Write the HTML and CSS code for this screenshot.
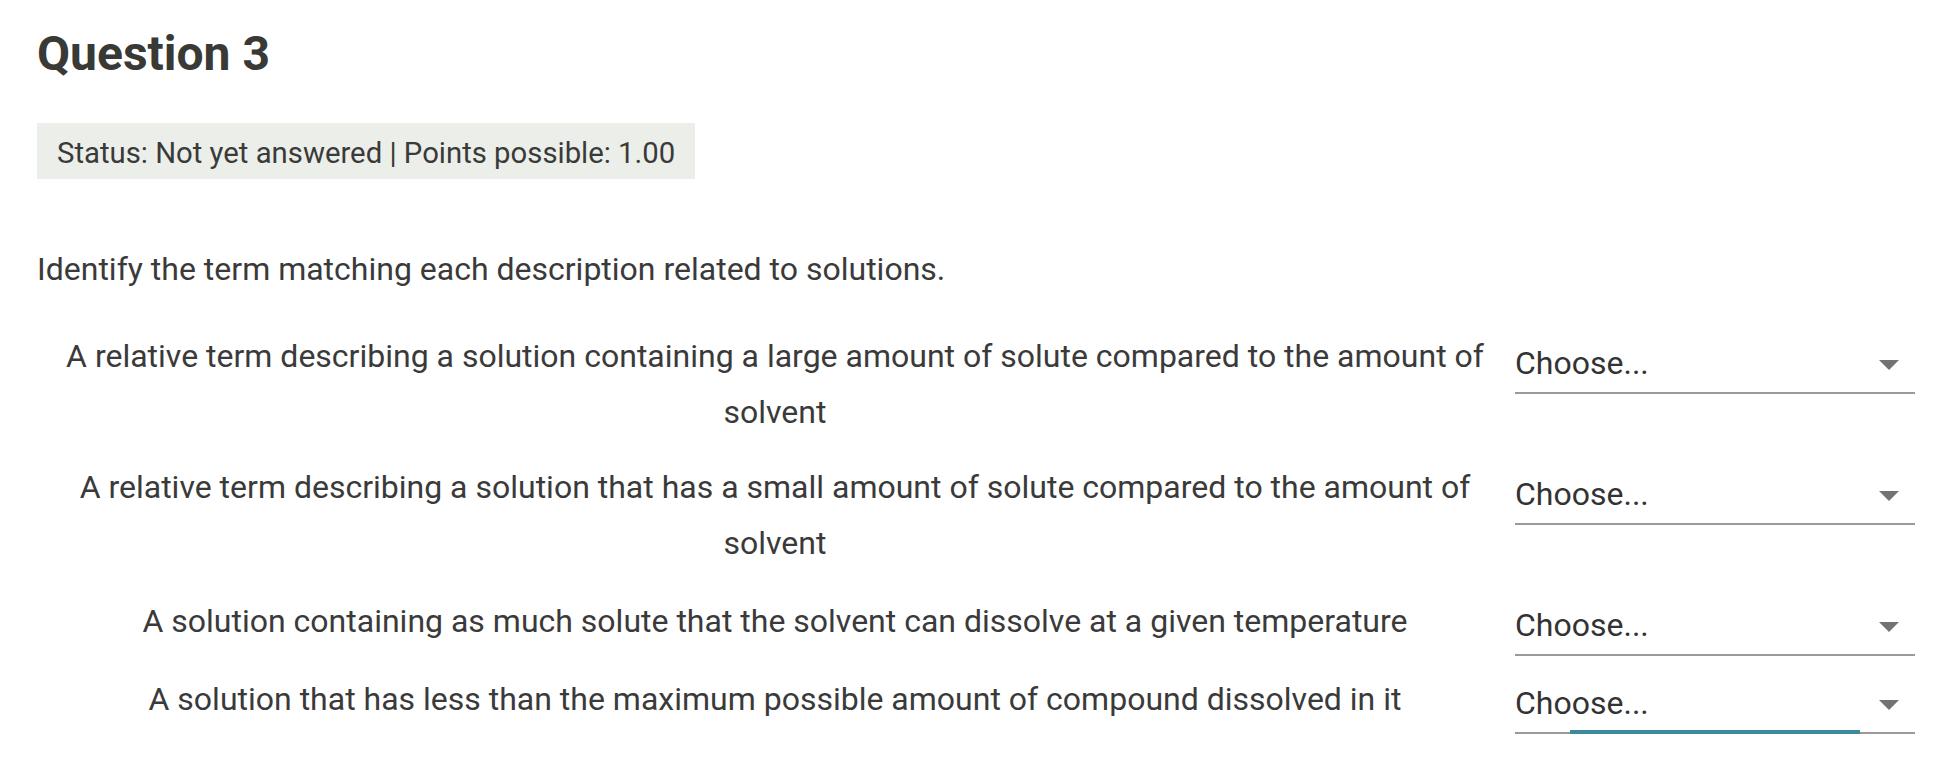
FILE: index.html
```html
<!DOCTYPE html>
<html lang="en">
<head>
<meta charset="utf-8">
<title>Question 3</title>
<link rel="stylesheet" href="styles.css">
</head>
<body>
<div class="page">
  <h2 class="title">Question 3</h2>
  <div class="status">Status: Not yet answered | Points possible: 1.00</div>
  <p class="prompt">Identify the term matching each description related to solutions.</p>
  <div class="rows">
    <div class="row">
      <div class="desc">A relative term describing a solution containing a large amount of solute compared to the amount of solvent</div>
      <div class="select"><span class="value">Choose...</span><span class="caret"></span></div>
    </div>
    <div class="row">
      <div class="desc">A relative term describing a solution that has a small amount of solute compared to the amount of solvent</div>
      <div class="select"><span class="value">Choose...</span><span class="caret"></span></div>
    </div>
    <div class="row">
      <div class="desc one-line">A solution containing as much solute that the solvent can dissolve at a given temperature</div>
      <div class="select"><span class="value">Choose...</span><span class="caret"></span></div>
    </div>
    <div class="row">
      <div class="desc one-line">A solution that has less than the maximum possible amount of compound dissolved in it</div>
      <div class="select focused"><span class="value">Choose...</span><span class="caret"></span><span class="focus-bar"></span></div>
    </div>
  </div>
</div>
</body>
</html>
```

FILE: styles.css
```css
html, body {
  margin: 0;
  padding: 0;
  background: #ffffff;
}

body {
  font-family: Roboto, "Liberation Sans", Arial, sans-serif;
  color: #3a3a3a;
}

.page {
  padding: 25px 43px 0 37px;
}

.title {
  margin: 0;
  font-size: 48px;
  line-height: 57.6px;
  font-weight: 700;
  color: #393935;
}

.status {
  display: inline-block;
  margin-top: 40px;
  padding: 4px 20px 0;
  height: 52px;
  line-height: 52px;
  font-size: 29.3px;
  background: #eceee9;
  color: #3a3a3a;
  white-space: nowrap;
}

.prompt {
  margin: 66px 0 0;
  font-size: 32px;
  line-height: 48px;
}

.rows {
  margin-top: 35px;
  display: flex;
  flex-direction: column;
}

.row {
  display: flex;
  align-items: flex-start;
  gap: 2px;
}

.desc {
  flex: 1;
  padding: 0 12px 19px;
  text-align: center;
  font-size: 32px;
  line-height: 56px;
}

.desc.one-line {
  padding-top: 3px;
}

.select {
  position: relative;
  width: 400px;
  height: 49px;
  padding-top: 15px;
  margin-bottom: 12px;
  border-bottom: 2px solid #9a9a9a;
  font-size: 32px;
  line-height: 40px;
  color: #333333;
}

.value {
  display: block;
}

.caret {
  position: absolute;
  right: 16px;
  top: 32px;
  width: 0;
  height: 0;
  border-left: 10px solid transparent;
  border-right: 10px solid transparent;
  border-top: 10px solid #737373;
}

.focus-bar {
  position: absolute;
  left: 55px;
  width: 290px;
  bottom: -2px;
  height: 4px;
  background: #3a8a9c;
}
```
